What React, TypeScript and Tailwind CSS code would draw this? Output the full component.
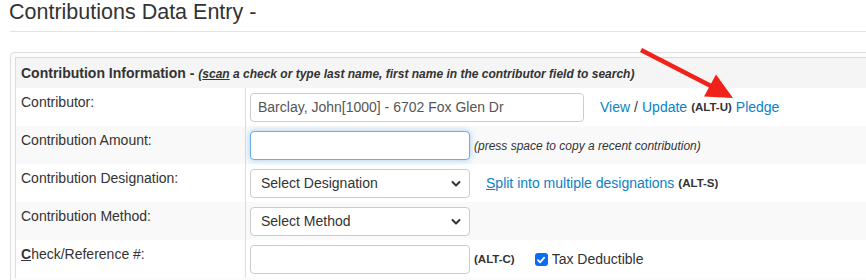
import React from "react";

const font = { fontFamily: '"Liberation Sans", Arial, Helvetica, sans-serif' };

function Chevron() {
  return (
    <svg width="10" height="7" viewBox="0 0 10 7" className="absolute right-[8px] top-1/2 -translate-y-1/2 pointer-events-none">
      <path d="M1.5 1.5 L5 5 L8.5 1.5" fill="none" stroke="#333" strokeWidth="2" strokeLinecap="round" strokeLinejoin="round" />
    </svg>
  );
}

function Row({ label, children, striped }: { label: React.ReactNode; children?: React.ReactNode; striped?: boolean }) {
  return (
    <div className={`flex h-[38px] ${striped ? "bg-[#f9f9f9]" : "bg-white"}`}>
      <div className="w-[230px] shrink-0 border-r border-[#dddddd] px-[5px] pt-[4px] text-[14px] leading-[20px] text-[#333]">
        {label}
      </div>
      <div className="flex items-start pl-[4px] pt-[5px]">{children}</div>
    </div>
  );
}

export default function App() {
  return (
    <div className="w-[866px] h-[280px] overflow-hidden bg-white text-[#333]" style={font}>
      <div className="w-[960px]">
        <h1 className="pl-[9px] text-[21.5px] leading-[24px] text-[#333] font-normal">Contributions Data Entry -</h1>
        <div className="ml-[10px] mt-[7px] border-t border-[#e3e3e3]" />
        <div className="ml-[10px] mt-[20px] rounded-[4px] border border-[#dddddd] bg-[#fcfcfc] p-[4px]">
          <div className="border-l border-t border-[#dddddd] bg-white">
            <div className="flex h-[30px] items-center bg-[#f5f5f5] px-[5px] pt-[1px]">
              <span className="text-[14px] font-bold text-[#333]">Contribution Information -&nbsp;</span>
              <span className="text-[12px] font-bold italic text-[#333]">
                (<span className="underline">scan</span> a check or type last name, first name in the contributor field to search)
              </span>
            </div>
            <Row label="Contributor:">
              <div className="flex items-center">
                <div className="flex h-[29px] w-[334px] items-center rounded-[4px] border border-[#cccccc] bg-white pl-[7px] text-[14px] text-[#555]">
                  Barclay, John[1000] - 6702 Fox Glen Dr
                </div>
                <div className="ml-[16px] flex items-center text-[14px]">
                  <span className="text-[#0a82c6]">View</span>
                  <span className="mx-[4px] text-[#333]">/</span>
                  <span className="text-[#0a82c6]">Update</span>
                  <span className="ml-[4px] text-[11.5px] font-bold text-[#333]">(ALT-U)</span>
                  <span className="ml-[4px] text-[#0a82c6]">Pledge</span>
                </div>
              </div>
            </Row>
            <Row label="Contribution Amount:" striped>
              <div className="flex items-center">
                <div className="h-[29px] w-[220px] rounded-[4px] border border-[#66afe9] bg-white shadow-[0_0_6px_rgba(102,175,233,0.6)]" />
                <span className="ml-[4px] text-[12px] italic text-[#333]">(press space to copy a recent contribution)</span>
              </div>
            </Row>
            <Row label="Contribution Designation:">
              <div className="flex items-center">
                <div className="relative flex h-[29px] w-[220px] items-center rounded-[4px] border border-[#cccccc] bg-white pl-[10px] text-[14px] text-[#333]">
                  Select Designation
                  <Chevron />
                </div>
                <span className="ml-[16px] text-[14px] text-[#0a82c6]">
                  <span className="underline">S</span>plit into multiple designations
                </span>
                <span className="ml-[4px] text-[11.5px] font-bold text-[#333]">(ALT-S)</span>
              </div>
            </Row>
            <Row label="Contribution Method:" striped>
              <div className="relative flex h-[29px] w-[220px] items-center rounded-[4px] border border-[#cccccc] bg-white pl-[10px] text-[14px] text-[#333]">
                Select Method
                <Chevron />
              </div>
            </Row>
            <Row
              label={
                <span>
                  <span className="font-bold underline">C</span>heck/Reference #:
                </span>
              }
            >
              <div className="flex items-center">
                <div className="h-[29px] w-[220px] rounded-[4px] border border-[#cccccc] bg-white" />
                <span className="ml-[4px] text-[11.5px] font-bold text-[#333]">(ALT-C)</span>
                <span className="ml-[20px] flex h-[13px] w-[13px] items-center justify-center rounded-[3px] bg-[#0b6cf5]">
                  <svg width="10" height="10" viewBox="0 0 10 10">
                    <path d="M2 5.2 L4.1 7.4 L8.2 2.6" fill="none" stroke="white" strokeWidth="1.8" strokeLinecap="round" strokeLinejoin="round" />
                  </svg>
                </span>
                <span className="ml-[4px] text-[14px] text-[#333]">Tax Deductible</span>
              </div>
            </Row>
          </div>
        </div>
      </div>
      <svg className="pointer-events-none absolute left-0 top-0" width="866" height="280">
        <line x1="641" y1="50" x2="711" y2="86" stroke="#f0221a" strokeWidth="4.5" />
        <polygon points="704,96.5 716,74.5 733,98" fill="#f0221a" />
      </svg>
    </div>
  );
}
